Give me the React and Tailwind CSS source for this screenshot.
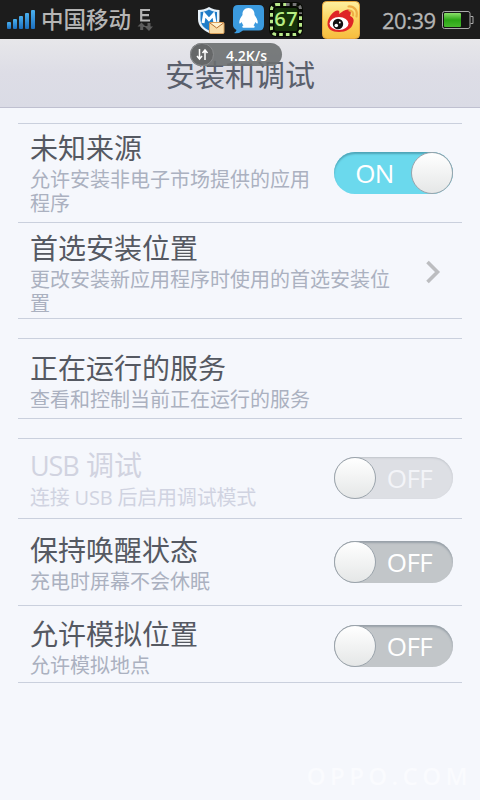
const groups = [
  {
    gap: "mt-[15px]",
    rows: [
      { title: "未知来源", lines: ["允许安装非电子市场提供的应用", "程序"], size: "h-[99px] pt-[6px]", toggle: "on", togglePos: "mt-[22px]" },
      { title: "首选安装位置", lines: ["更改安装新应用程序时使用的首选安装位", "置"], size: "h-24 pt-[7px]", arrow: true },
    ],
  },
  {
    gap: "mt-[19px]",
    rows: [
      { title: "正在运行的服务", lines: ["查看和控制当前正在运行的服务"], size: "h-20 pt-[11px]" },
    ],
  },
  {
    gap: "mt-[19px]",
    rows: [
      { latin: "USB", title: " 调试", lines: ["连接 USB 后启用调试模式"], size: "h-20 pt-2", toggle: "off", disabled: true, togglePos: "mt-[10px]" },
      { title: "保持唤醒状态", lines: ["充电时屏幕不会休眠"], size: "h-[87px] pt-[13px]", toggle: "off", togglePos: "mt-[9px]" },
      { title: "允许模拟位置", lines: ["允许模拟地点"], size: "h-[77px] pt-2.5", toggle: "off", togglePos: "mt-[9px]" },
    ],
  },
]

export default function App() {
  return (
    <div className="relative w-[480px] h-[800px] overflow-hidden flex flex-col bg-[#f5f7fc] font-['Open_Sans','Noto_Sans_CJK_SC',sans-serif]">
      <StatusBar />

      {/* Header */}
      <header className="h-[69px] shrink-0 flex items-center justify-center bg-linear-to-b from-[#e7e7ea] via-[#dddde6] to-[#dadbe5] border-b border-[#bfc0d0]">
        <h1 className="text-[30px] leading-10 text-[#5a5f6c] mt-1">安装和调试</h1>
      </header>

      {/* Settings */}
      <main className="flex-1 px-[18px]">
        {groups.map((group, i) => (
          <section key={i} className={`${group.gap} border-b border-[#cad0dd]`}>
            {group.rows.map(row => <SettingRow key={row.title} row={row} />)}
          </section>
        ))}
      </main>

      <footer className="h-12 shrink-0 pr-[8px] pt-[9px] text-right text-[24px] leading-[30px] font-semibold tracking-[4.4px] text-[#fafbfe]">
        OPPO.COM
      </footer>

      <SpeedBadge />
    </div>
  )
}

function SettingRow({ row }) {
  return (
    <div className={`${row.size} flex justify-between pl-3 pr-[9px] border-t border-[#cad0dd]`}>
      <div className="whitespace-nowrap">
        <p className={`text-[28px] leading-9 whitespace-pre ${row.disabled ? "text-[#d1d3e0]" : "text-[#555962]"}`}>
          {row.latin && <span className="text-[27px] tracking-[-1.1px]">{row.latin}</span>}
          {row.title}
        </p>
        <div className={`text-[20px] leading-6 mt-0.5 ${row.disabled ? "text-[#d0d3e1] tracking-[-0.2px]" : "text-[#abb1c0]"}`}>
          {row.lines.map(line => <p key={line}>{line}</p>)}
        </div>
      </div>
      {row.toggle && <Toggle on={row.toggle === "on"} disabled={row.disabled} pos={row.togglePos} />}
      {row.arrow && (
        <svg width="16" height="24" viewBox="0 0 16 24" className="mt-[30px] mr-3 shrink-0">
          <path d="M2.5 2 L12.5 12 L2.5 22" fill="none" stroke="#bcbdc0" strokeWidth="3.6" />
        </svg>
      )}
    </div>
  )
}

function Toggle({ on, disabled, pos }) {
  const track = on
    ? "flex-row-reverse bg-[#6bd9ed] shadow-[inset_0_2px_2px_#4fa5b8]"
    : disabled
      ? "bg-[#dddfe4] shadow-[inset_0_1px_2px_#c0c4cb]"
      : "bg-[#c2c6c9] shadow-[inset_0_2px_2px_#98a1a9]"
  return (
    <div className={`${pos} ${track} w-[119px] h-[42px] shrink-0 flex items-center rounded-full`}>
      <span className="w-[42px] h-[42px] rounded-full border border-[#9ba4ac] bg-linear-to-b from-white to-[#e5e7e7]" />
      <span className={`flex-1 text-center text-[26px] leading-[42px] tracking-[-0.6px] ${on ? "pl-1" : "pr-2.5"} ${disabled ? "text-[#f3f4f8]" : "text-white"}`}>
        {on ? "ON" : "OFF"}
      </span>
    </div>
  )
}

function StatusBar() {
  return (
    <div className="h-[39px] shrink-0 flex items-center bg-[#1c1c1c] text-[#b5b5b5]">
      <svg width="30" height="22" viewBox="0 0 30 22" className="ml-[6px]">
        <defs>
          <linearGradient id="signal" x1="0" y1="0" x2="0" y2="1">
            <stop offset="0" stopColor="#4bb0ee" />
            <stop offset="1" stopColor="#1b6fc0" />
          </linearGradient>
        </defs>
        <g fill="url(#signal)">
          <rect x="1" y="13" width="4" height="7" rx="1" />
          <rect x="7" y="10" width="4" height="10" rx="1" />
          <rect x="13" y="7" width="4" height="13" rx="1" />
          <rect x="19" y="4" width="4" height="16" rx="1" />
          <rect x="25" y="1" width="4" height="19" rx="1" />
        </g>
      </svg>
      <span className="ml-[5px] w-[92px] shrink-0 text-[22.5px] leading-[38px] font-medium whitespace-nowrap">中国移动</span>
      <svg width="18" height="24" viewBox="0 0 18 24" className="ml-[4px] shrink-0">
        <path d="M13 2H4.2V12.5H13M4 7.2H12" fill="none" stroke="#b5b5b5" strokeWidth="2.2" />
        <path d="M0.500 18.500L4.500 14.500L8 18L8 19H6.200V22H3.200V18.500ZM8 18V19L12 23L16 18.500H13.500V15H10.500V18Z" fill="#5c5c5c" />
      </svg>

      {/* Notification icons */}
      <div className="ml-[42px] flex items-center shrink-0">
        <ShieldMailIcon />
        <QQIcon />
        <svg width="34" height="35" viewBox="0 0 34 35" className="shrink-0 ml-[5px]">
          <rect x="0" y="0" width="34" height="35" rx="7" fill="#080b05" />
          <rect x="2.5" y="2.5" width="29" height="30" rx="5" fill="none" stroke="#b9e98a" strokeWidth="3" strokeDasharray="3.6 3.1" />
          <path d="M17 2.5H26.5Q31.5 2.5 31.5 7.5V12" fill="none" stroke="#080b05" strokeWidth="3.4" />
          <path d="M17 2.5H26.5Q31.5 2.5 31.5 7.5V12" fill="none" stroke="#777" strokeWidth="3" strokeDasharray="3.6 3.1" />
          <rect x="5.5" y="6" width="23" height="23" rx="2" fill="#16330a" />
          <text x="17.3" y="24" textAnchor="middle" fontSize="20" fontWeight="600" letterSpacing="0.6" fill="#b8ee83" fontFamily="Open Sans, sans-serif">67</text>
        </svg>
        <WeiboIcon />
      </div>

      <span className="ml-[22px] text-[22px] leading-[38px] w-[56px] shrink-0 tracking-[-0.5px] [-webkit-text-stroke:0.3px_#b5b5b5]">20:39</span>
      <svg width="32" height="18" viewBox="0 0 32 18" className="ml-[4px] mt-px shrink-0">
        <defs>
          <linearGradient id="charge" x1="0" y1="0" x2="0" y2="1">
            <stop offset="0" stopColor="#8be06a" />
            <stop offset="0.5" stopColor="#2ba516" />
            <stop offset="1" stopColor="#46b92c" />
          </linearGradient>
        </defs>
        <rect x="0.5" y="0.5" width="27.5" height="17" rx="2" fill="#151515" stroke="#aaa" />
        <path d="M28.5 5.5H31V12.5H28.5" fill="none" stroke="#aaa" />
        <rect x="2" y="2" width="17" height="14" rx="1" fill="url(#charge)" />
      </svg>
    </div>
  )
}

function ShieldMailIcon() {
  return (
    <svg width="29" height="30" viewBox="0 0 29 30" className="mt-[2px]">
      <path d="M12 1C9 3 5 4 1 4V13C1 20 6 24 12 27C18 24 22.5 20 22.5 13V4C19 4 15 3 12 1Z" fill="#e8f2fa" />
      <path d="M12 3.5C9.5 5 7 6 3.5 6V13C3.5 18.5 7 22 12 24.5C17 22 20 18.5 20 13V6C17 6 14.5 5 12 3.5Z" fill="#1f7cc8" />
      <path d="M6 17L7.500 8.500L12 13.500L16.500 8.500L18 17" fill="none" stroke="#fff" strokeWidth="3" />
      <rect x="12.5" y="16.5" width="14.5" height="11" rx="1" fill="#f9dda8" stroke="#d99f5b" />
      <path d="M13 17L19.7 22L26.5 17" fill="#fff2d0" stroke="#b86f31" />
    </svg>
  )
}

function QQIcon() {
  return (
    <svg width="31" height="30" viewBox="0 0 31 30" className="ml-[7px] mt-px">
      <path d="M5 0H26Q31 0 31 5V20Q31 25.5 26 25.5H10Q6 29 1 28Q3.5 26.5 3.5 25Q0 23 0 20V5Q0 0 5 0Z" fill="#3b9ade" />
      <path d="M15.5 3C11 3 9.300 6.500 9.500 10C7.500 12.500 5.500 16.500 6.500 18.500C7.500 18.500 8.300 17.800 8.800 17C9 18.500 9.800 19.500 10.500 20.300C8.500 21.300 9 22.800 11 22.800H20C22 22.800 22.500 21.300 20.500 20.300C21.200 19.500 22 18.500 22.200 17C22.700 17.800 23.500 18.500 24.500 18.500C25.500 16.500 23.500 12.500 21.500 10C21.700 6.500 20 3 15.500 3Z" fill="#fff" />
    </svg>
  )
}

function WeiboIcon() {
  return (
    <svg width="38" height="38" viewBox="0 0 38 38" className="ml-[19px]">
      <defs>
        <linearGradient id="weibo" x1="0" y1="0" x2="0" y2="1">
          <stop offset="0" stopColor="#fff0a0" />
          <stop offset="0.5" stopColor="#fbd35e" />
          <stop offset="1" stopColor="#f7bd3e" />
        </linearGradient>
      </defs>
      <rect x="0.5" y="0.5" width="37" height="37" rx="4" fill="url(#weibo)" stroke="#e9a83c" />
      <path d="M15 9.500C17.500 9 17.800 11 17 13C20 11 22.500 8.500 26 8.500C29 8.500 29.500 11.500 28 15C31.500 16.500 32.500 19 31 22.500C29.500 28 24 31 17 31C10 31 5.500 28 5.500 23C5.500 16.500 11 10.500 15 9.500Z" fill="#df2426" />
      <ellipse cx="17" cy="22.500" rx="9.5" ry="6.500" fill="#fff" />
      <circle cx="16" cy="23" r="5.2" fill="#111" />
      <circle cx="14.3" cy="24.5" r="1.8" fill="#fff" />
      <circle cx="17.8" cy="21.5" r="0.9" fill="#fff" />
      <path d="M27.500 9.500C30 9.500 31.500 11.500 31 14.500M26.500 5.500C32 5 36 9.500 34.500 15.500" fill="none" stroke="#efae45" strokeWidth="2.2" strokeLinecap="round" />
    </svg>
  )
}

/* Floating network speed pill, sits on top of the header */
function SpeedBadge() {
  return (
    <div className="absolute left-[190px] top-[43px] w-[92px] h-[23px] flex items-center rounded-full bg-[#6c6f70]/90 text-white">
      <span className="w-6 h-[23px] flex items-center justify-center rounded-full border border-[#8b8d8f] bg-[#666869]">
        <svg width="13" height="13" viewBox="0 0 13 13">
          <path d="M3.5 1V10.5M1 8L3.5 11L6 8M9 12V2.5M6.5 5L9 2L11.5 5" fill="none" stroke="#fff" strokeWidth="1.5" />
        </svg>
      </span>
      <span className="ml-[12px] mt-px text-[14px] leading-[23px] font-semibold">4.2K/s</span>
    </div>
  )
}
